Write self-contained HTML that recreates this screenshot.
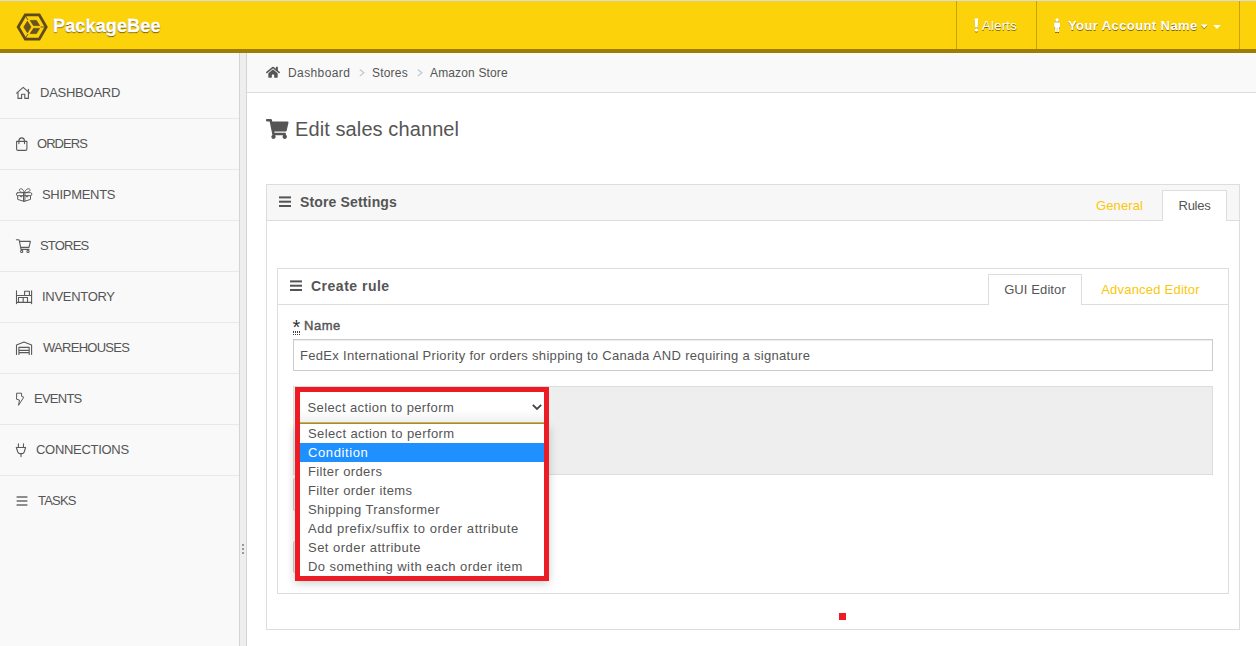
<!DOCTYPE html>
<html lang="en">
<head>
<meta charset="utf-8">
<title>PackageBee - Edit sales channel</title>
<style>
*{box-sizing:border-box;margin:0;padding:0}
html,body{width:1256px;height:646px;overflow:hidden;background:#fff}
body{font-family:"Liberation Sans","DejaVu Sans",sans-serif;font-size:13px;color:#555;position:relative}
.abs{position:absolute}
svg{display:block;overflow:visible}
/* header */
#topline{position:absolute;left:0;top:0;width:1256px;height:1px;background:#d6dbf5}
#hdr{position:absolute;left:0;top:1px;width:1256px;height:52px;background:#fcd20a;border-bottom:4px solid #9d7d00}
#hdr .div{position:absolute;top:0;width:1px;height:48px;background:#c9a400}
#brand{position:absolute;left:53px;top:13px;font-size:18px;font-weight:bold;color:#fff;line-height:24px;text-shadow:0 1px 1px rgba(60,40,0,.8);white-space:nowrap;-webkit-text-stroke:.35px #fff;letter-spacing:.15px}
.hl{position:absolute;color:#fff;line-height:20px;white-space:nowrap;text-shadow:0 1px 0 rgba(40,25,0,.6)}
/* sidebar */
#side{position:absolute;left:0;top:53px;width:239px;height:593px;background:#f9f9f9}
#side .it{position:absolute;left:0;width:239px;height:51px;border-bottom:1px solid #e9e9e9}
#side .it span{position:absolute;top:0px;line-height:50px;font-size:13px;color:#555;white-space:nowrap}
#side .it svg{position:absolute}
#split{position:absolute;left:239px;top:53px;width:8px;height:593px;background:#eee;border-left:1px solid #d4d4d4;border-right:1px solid #d4d4d4}
/* main */
#crumb{position:absolute;left:247px;top:53px;width:1009px;height:40px;background:#f9f9f9;border-bottom:1px solid #ddd}
#crumb span{position:absolute;top:1px;line-height:39px;font-size:12px;color:#555;white-space:nowrap}
#title{position:absolute;left:295px;top:114px;font-size:20px;line-height:30px;color:#555;white-space:nowrap;letter-spacing:.1px}
.panel{position:absolute;border:1px solid #ddd;background:#fff}
.phead{position:absolute;left:0;top:0;right:0;border-bottom:1px solid #ddd}
.ptitle{position:absolute;font-size:14px;font-weight:bold;color:#555;white-space:nowrap}
.tab{position:absolute;font-size:13px;text-align:center;white-space:nowrap}
.tab.on{background:#fff;border:1px solid #ddd;border-bottom:0;color:#555}
.tab.off{color:#fbc708}

#lbl{position:absolute;left:293px;top:317px;line-height:18px;font-size:13px;color:#555;white-space:nowrap;font-weight:normal;-webkit-text-stroke:.4px #555;letter-spacing:.55px}
#lbl abbr{text-decoration:none;display:inline-block;width:7px;height:18px;margin-right:4px;font-weight:normal;color:#333;position:relative;vertical-align:top}
#lbl abbr i{position:absolute;left:-.5px;top:0px;-webkit-text-stroke:0;font-style:normal;font-size:20px;line-height:20px}
#lbl abbr:after{content:"";position:absolute;left:0;top:14px;width:7px;height:4px;background:repeating-linear-gradient(90deg,#444 0 1px,transparent 1px 2px),#fff;-webkit-mask:linear-gradient(#000 0 2px,transparent 2px 3px,#000 3px 4px);mask:linear-gradient(#000 0 2px,transparent 2px 3px,#000 3px 4px)}
#inp{position:absolute;left:293px;top:339px;width:920px;height:32px;border:1px solid #ccc;background:#fff;box-shadow:inset 0 1px 1px rgba(0,0,0,.075);padding:1px 0 0 6px;line-height:30px;font-size:13px;color:#555;letter-spacing:.31px;white-space:nowrap}
#act{position:absolute;left:293px;top:386px;width:920px;height:89px;border:1px solid #ddd;background:#eee}
.sliver{position:absolute;left:293px;width:8px;background:#eee;border:1px solid #ccc;border-radius:2px 0 0 2px}
#red{position:absolute;left:295px;top:387px;width:254px;height:194px;border:5px solid #ed1c24;background:#fff}
#shadow{position:absolute;left:296px;top:426px;width:252px;height:154px;box-shadow:0 2px 9px 1px rgba(0,0,0,.2)}
#sel{position:absolute;left:0;top:0;width:244px;height:31px;background:linear-gradient(#fff 60%,#f1f1f1);border-bottom:1px solid #e3b600;line-height:30px;padding:1px 0 0 7.500px;font-size:13px;color:#555;letter-spacing:.39px;white-space:nowrap}
#list{position:absolute;left:0;top:31px;width:244px;height:153px;border-top:1px solid #8a8a8a;background:#fff}
#list div{height:19px;line-height:19px;padding-left:8px;font-size:13px;color:#555;white-space:nowrap;letter-spacing:.38px}
#list div.hi{background:#1e90ff;color:#fff}
#dot{position:absolute;left:839px;top:613px;width:7px;height:7px;background:#ed1c24}
</style>
</head>
<body>
<div id="topline"></div>
<div id="hdr">
  
  <svg class="abs" style="left:0;top:-1px" width="1256" height="53" viewBox="0 0 1256 53">
    <g fill="none" stroke="#5f4a1c" stroke-linejoin="miter">
      <path d="M18.200 27 L25.300 14.900 H39.200 L46.200 27 L39.200 39.100 H25.300 Z" stroke-width="2.800"/>
      <path d="M25 15 L28 20 M25 39 L28 34 M40.500 27 H46" stroke-width="0.900"/>
    </g>
    <g fill="#6a5220" stroke="#5f4a1c" stroke-width=".7" stroke-linejoin="miter">
      <path d="M23.8 27 L27.4 21.2 L31 27 L27.4 32.8 Z"/>
      <path d="M30.2 20.4 H36.4 L39.6 25.6 H33.5 Z"/>
      <path d="M33.5 28.4 H39.6 L36.4 33.6 H30.2 Z"/>
    </g>
    <g fill="#fff" filter="url(#sh)">
      <path d="M974.6 18.6 H978.2 L977.6 27.6 H975.2 Z M974.8 30 a1.6 1.6 0 1 0 3.2 0 a1.6 1.6 0 1 0 -3.2 0"/>
      <path d="M1055.400 20 a1.700 1.700 0 1 0 3.400 0 a1.700 1.700 0 1 0 -3.400 0 M1055.200 22.400 H1059 Q1060 22.400 1060 23.400 V27.200 H1059 V32 H1057.400 V28 H1056.800 V32 H1055.200 V27.200 H1054.200 V23.400 Q1054.200 22.400 1055.200 22.400 Z"/>
      <path d="M1200.800 24.600 H1207.600 L1204.200 28.200 Z"/>
    </g>
    <path d="M1213.200 25 H1220.800 L1217 29 Z" fill="#fff"/>
    <defs><filter id="sh" x="-20%" y="-20%" width="140%" height="150%"><feDropShadow dx="0" dy="1" stdDeviation="0.300" flood-color="#3c2800" flood-opacity=".7"/></filter></defs>
  </svg>
  <div id="brand">PackageBee</div>
  <div class="div" style="left:956px"></div>
  <div class="div" style="left:1036px"></div>
  <div class="div" style="left:1239px"></div>
  <div class="hl" style="left:982px;top:15px;letter-spacing:.3px">Alerts</div>
  <div class="hl" style="left:1068px;top:15px;font-weight:bold;letter-spacing:.4px">Your Account Name</div>
</div>

<div id="side">
  <div class="it" style="top:15px"><span style="left:40px;letter-spacing:-.25px">DASHBOARD</span></div>
  <div class="it" style="top:66px"><span style="left:37px;letter-spacing:-.95px">ORDERS</span></div>
  <div class="it" style="top:117px"><span style="left:42px;letter-spacing:-.3px">SHIPMENTS</span></div>
  <div class="it" style="top:168px"><span style="left:40px;letter-spacing:-.8px">STORES</span></div>
  <div class="it" style="top:219px"><span style="left:42px;letter-spacing:-.3px">INVENTORY</span></div>
  <div class="it" style="top:270px"><span style="left:43px;letter-spacing:-.72px">WAREHOUSES</span></div>
  <div class="it" style="top:321px"><span style="left:34px;letter-spacing:-.75px">EVENTS</span></div>
  <div class="it" style="top:372px"><span style="left:36px;letter-spacing:-.3px">CONNECTIONS</span></div>
  <div class="it" style="top:423px;border-bottom:0"><span style="left:38px;letter-spacing:-.8px">TASKS</span></div>
</div>

<svg class="abs" style="left:0;top:0" width="239" height="646" viewBox="0 0 239 646" fill="none" stroke="#5a5a5a" stroke-width="1.1" stroke-linecap="round" stroke-linejoin="round">
  <!-- home -->
  <path d="M16.6 93.2 L23.2 87.4 L29.8 93.2 M28.4 89.2 V91.8 M18 92.4 V98.4 H21.6 V94.2 H24.8 V98.4 H28.4 V92.4"/>
  <!-- bag -->
  <path d="M16.6 141.4 H26.9 V149 Q26.9 150.4 25.5 150.4 H18 Q16.6 150.4 16.6 149 Z M18.9 143.6 V141 Q18.9 137.9 21.7 137.9 Q24.5 137.9 24.5 141 V143.6"/>
  <!-- gift -->
  <path d="M24.200 192.600 C20 192.600 19.100 191 19.400 189.800 C19.900 188.100 23.400 188.100 24.200 192.600 M24.600 192.600 C28.600 192.600 30.300 191 30 189.800 C29.500 188.100 25.600 188.100 24.600 192.600 M17.600 192.700 H30.600 Q31.800 192.700 31.800 194.200 Q31.800 195.700 30.600 195.700 H17.600 Q16.400 195.700 16.400 194.200 Q16.400 192.700 17.600 192.700 Z M17.700 195.900 V199.400 L24.100 201.400 L30.500 199.400 V195.900 M23.500 192.800 V201.200 M24.900 192.800 V201.200 M20.200 195.900 L21.200 197.200 L22.200 195.900 M26.100 195.900 L27.100 197.200 L28.100 195.900" stroke-width="1"/>
  <!-- cart -->
  <path d="M16.4 239.8 H18.4 Q19.2 239.8 19.4 240.8 L21 249.4 H29 M19.6 241.4 H30.4 L29 247.4 H20.8"/>
  <circle cx="21.7" cy="251.4" r="1.1"/><circle cx="28" cy="251.4" r="1.1"/>
  <!-- inventory -->
  <path d="M16.5 290.8 V303.6 M31.6 290.8 V303.6 M16.5 295.5 H31.6 M16.5 302.4 H31.6 M24.6 295.5 V291.2 H29.4 V295.5 M18.5 302.4 V297.5 H27.5 V302.4 M23.2 297.5 V302.4"/>
  <!-- warehouse -->
  <path d="M16.5 354.5 V345 L24 342 L31.6 345 V354.5 M18.9 354.5 V347.4 H29.2 V354.5 M18.9 350.4 H29.2 M18.9 352.6 H29.2"/>
  <!-- bolt -->
  <path d="M17 393.200 H21.600 V396.400 L23.800 397.200 L18.500 405.300 L19.500 400.100 L17 399.400 Z" stroke-width="1"/>
  <!-- plug -->
  <path d="M18.4 443.8 V447.4 M23.5 443.8 V447.4 M16.3 447.5 H25.6 L24.2 452 Q23.6 453.6 22 453.6 H20 Q18.4 453.6 17.8 452 Z M21 453.6 V456.6"/>
  <!-- tasks bars -->
  <path d="M16.6 497 H27.4 M16.6 501 H27.4 M16.6 505 H27.4" stroke-width="1.7" stroke-linecap="butt" stroke="#6a6a6a"/>
</svg>
<div id="split"></div>
<div class="abs" style="left:242px;top:544px;width:2px;height:2px;background:#999;box-shadow:0 4px 0 #999,0 8px 0 #999"></div>

<div id="crumb">
  <span style="left:41px;letter-spacing:.4px">Dashboard</span>
  <span style="left:125px;letter-spacing:.2px">Stores</span>
  <span style="left:183px;letter-spacing:.15px">Amazon Store</span>
</div>

<svg class="abs" style="left:265.900px;top:66.100px" width="14" height="12.450" viewBox="0 0 576 512"><path fill="#555" d="M280.370 148.260L96 300.110V464a16 16 0 0 0 16 16l112.060-.29a16 16 0 0 0 15.920-16V368a16 16 0 0 1 16-16h64a16 16 0 0 1 16 16v95.640a16 16 0 0 0 16 16.050L464 480a16 16 0 0 0 16-16V300L295.670 148.260a12.190 12.190 0 0 0-15.300 0zM571.600 251.470L488 182.560V44.050a12 12 0 0 0-12-12h-56a12 12 0 0 0-12 12v72.610L318.470 43a48 48 0 0 0-61 0L4.340 251.470a12 12 0 0 0-1.600 16.900l25.500 31A12 12 0 0 0 45.150 301l235.220-193.740a12.190 12.190 0 0 1 15.300 0L530.900 301a12 12 0 0 0 16.900-1.600l25.500-31a12 12 0 0 0-1.700-16.930z"/></svg>
<svg class="abs" style="left:359.300px;top:68.700px" width="6" height="8" viewBox="0 0 6 8" fill="none" stroke="#c3c5cb" stroke-width="1.200"><path d="M0.800 0.500 L4.900 3.800 L0.800 7.100"/></svg>
<svg class="abs" style="left:417.400px;top:68.700px" width="6" height="8" viewBox="0 0 6 8" fill="none" stroke="#c3c5cb" stroke-width="1.200"><path d="M0.800 0.500 L4.900 3.800 L0.800 7.100"/></svg>
<svg class="abs" style="left:266px;top:118.500px" width="22.500" height="20" viewBox="0 0 576 512"><path fill="#555" d="M528.120 301.319l47.273-208C578.806 78.301 567.391 64 551.990 64H159.208l-9.166-44.810C147.758 8.021 137.930 0 126.529 0H24C10.745 0 0 10.745 0 24v16c0 13.255 10.745 24 24 24h69.883l70.248 343.435C147.325 417.100 136 435.222 136 456c0 30.928 25.072 56 56 56s56-25.072 56-56c0-15.674-6.447-29.835-16.824-40h209.647C430.447 426.165 424 440.326 424 456c0 30.928 25.072 56 56 56s56-25.072 56-56c0-22.172-12.888-41.332-31.579-50.405l5.517-24.276c3.413-15.018-8.002-29.319-23.403-29.319H218.117l-6.545-32h293.145c11.206 0 20.920-7.754 23.403-18.681z"/></svg>
<svg class="abs" style="left:279px;top:196px;z-index:5" width="12" height="12" viewBox="0 0 12 12" fill="#555"><rect x="0" y="0.400" width="12" height="2"/><rect x="0" y="4.700" width="12" height="2"/><rect x="0" y="9" width="12" height="2"/></svg>
<svg class="abs" style="left:290px;top:280px;z-index:5" width="12" height="12" viewBox="0 0 12 12" fill="#555"><rect x="0" y="0.400" width="12" height="2"/><rect x="0" y="4.700" width="12" height="2"/><rect x="0" y="9" width="12" height="2"/></svg>
<div id="title">Edit sales channel</div>

<div class="panel" id="p1" style="left:266px;top:184px;width:974px;height:446px">
  <div class="phead" style="height:36px;background:#f7f7f7"></div>
  <div class="ptitle" style="left:33px;top:7px;line-height:20px;letter-spacing:.15px">Store Settings</div>
  <div class="tab off" style="left:812px;top:6px;width:81px;height:30px;line-height:29px;letter-spacing:.1px">General</div>
  <div class="tab on" style="left:895px;top:5px;width:65px;height:31px;line-height:29px;letter-spacing:-.25px">Rules</div>
</div>
<div class="panel" id="p2" style="left:277px;top:268px;width:952px;height:326px">
  <div class="phead" style="height:36px"></div>
  <div class="ptitle" style="left:33px;top:7px;line-height:20px;letter-spacing:.5px">Create rule</div>
  <div class="tab on" style="left:710px;top:5px;width:94px;height:31px;line-height:29px;letter-spacing:.1px">GUI Editor</div>
  <div class="tab off" style="left:807px;top:6px;width:131px;height:30px;line-height:29px;letter-spacing:.22px">Advanced Editor</div>
</div>

<div id="lbl"><abbr title="required"><i>*</i></abbr>Name</div>
<div id="inp">FedEx International Priority for orders shipping to Canada AND requiring a signature</div>
<div id="act"></div>
<div class="sliver" style="top:478px;height:33px"></div>
<div class="sliver" style="top:541px;height:32px"></div>
<div id="shadow"></div>
<div id="red">
  <div id="sel">Select action to perform</div>
  <svg class="abs" style="left:232px;top:12px" width="10" height="7" viewBox="0 0 10 7" fill="none" stroke="#444" stroke-width="1.800"><path d="M0.800 0.800 L5 5 L9.200 0.800"/></svg>
  <div id="list">
    <div>Select action to perform</div>
    <div class="hi" style="letter-spacing:.6px">Condition</div>
    <div>Filter orders</div>
    <div>Filter order items</div>
    <div>Shipping Transformer</div>
    <div style="letter-spacing:.54px">Add prefix/suffix to order attribute</div>
    <div style="letter-spacing:.47px">Set order attribute</div>
    <div style="letter-spacing:.42px">Do something with each order item</div>
  </div>
</div>
<div id="dot"></div>
</body>
</html>
